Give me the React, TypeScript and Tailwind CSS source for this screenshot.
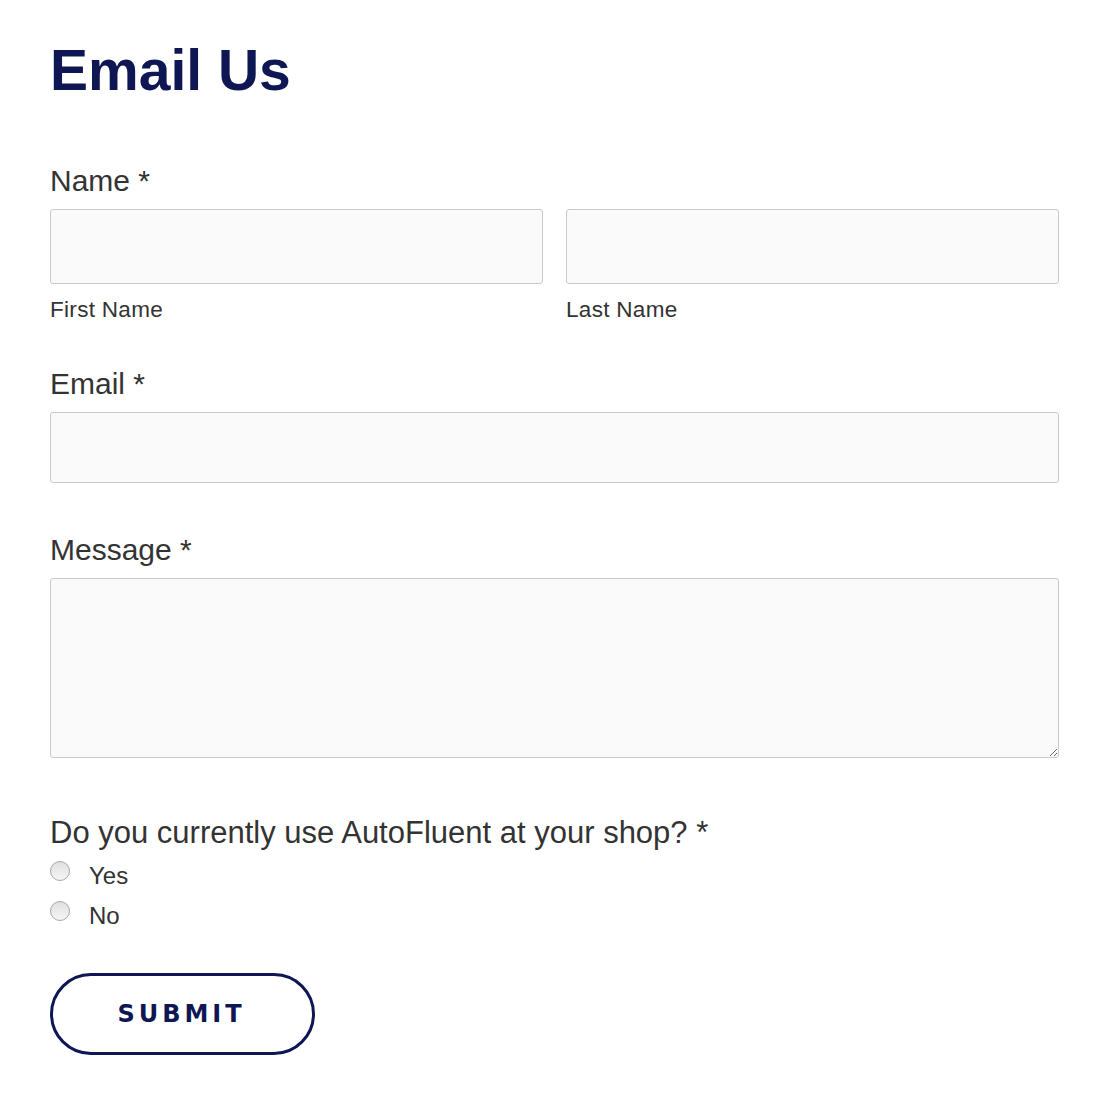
export default function App() {
  const field =
    "block w-full rounded-[3px] border border-[#c9c9c9] bg-[#fafafa] outline-none";
  const label = "block text-[30px] leading-none text-[#333333]";

  return (
    <div className="min-h-screen bg-white font-['Liberation_Sans',Arial,sans-serif]">
      <form className="w-[1009px] ml-[50px] pt-[42px] pb-10" onSubmit={(e) => e.preventDefault()}>
        <h1 className="text-[57px] leading-none font-bold text-[#0e1654]">Email Us</h1>

        {/* Name */}
        <div className="mt-[67px]">
          <label className={label}>Name *</label>
          <div className="mt-[13px] grid grid-cols-2 gap-[23px]">
            <div>
              <input type="text" className={`${field} h-[75px]`} />
              <span className="mt-[15px] block text-[22.5px] leading-none tracking-[0.3px] text-[#333333]">
                First Name
              </span>
            </div>
            <div>
              <input type="text" className={`${field} h-[75px]`} />
              <span className="mt-[15px] block text-[22.5px] leading-none tracking-[0.3px] text-[#333333]">
                Last Name
              </span>
            </div>
          </div>
        </div>

        {/* Email */}
        <div className="mt-[47px]">
          <label className={label}>Email *</label>
          <input type="email" className={`${field} mt-[13px] h-[71px]`} />
        </div>

        {/* Message */}
        <div className="mt-[52px]">
          <label className={label}>Message *</label>
          <textarea className={`${field} mt-[13px] h-[180px]`} />
        </div>

        {/* AutoFluent question */}
        <div className="mt-[59px]">
          <label className="block text-[31px] leading-none text-[#333333]">
            Do you currently use AutoFluent at your shop? *
          </label>
          <div className="mt-[13px] flex flex-col gap-[20px]">
            {["Yes", "No"].map((opt) => (
              <label key={opt} className="flex h-5 items-center gap-[19px]">
                <input
                  type="radio"
                  name="autofluent"
                  className="h-5 w-5 shrink-0 appearance-none rounded-full border border-[#a9a9a9] bg-gradient-to-b from-[#e0e0e0] to-[#f5f5f5]"
                />
                <span className="text-[24px] leading-none text-[#333333] translate-y-[5px]">{opt}</span>
              </label>
            ))}
          </div>
        </div>

        <button
          type="submit"
          className="mt-[52px] flex h-[82px] w-[265px] items-center justify-center rounded-full border-[3px] border-[#0e1654] bg-white text-[24px] font-bold tracking-[4px] text-[#0e1654] font-['DejaVu_Sans',sans-serif]"
        >
          <span className="pr-[2px]">SUBMIT</span>
        </button>
      </form>
    </div>
  );
}
